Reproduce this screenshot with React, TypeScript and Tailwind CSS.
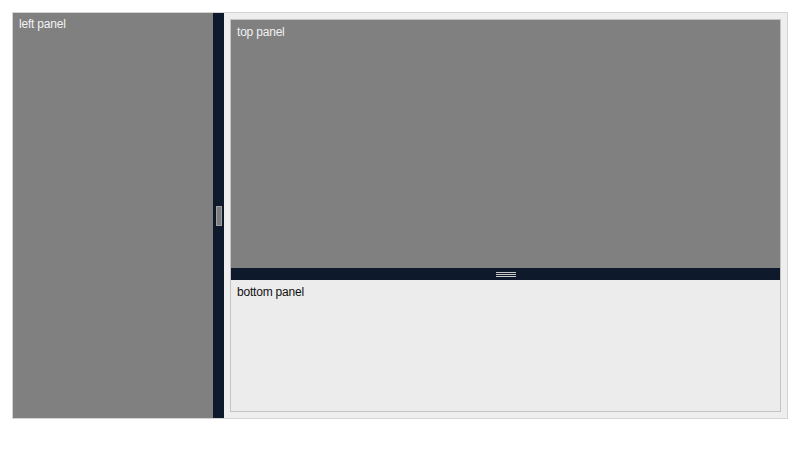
export default function App() {
  return (
    <div className="w-[800px] h-[450px] bg-white p-3" style={{ fontFamily: '"Liberation Sans", Arial, sans-serif' }}>
      <div className="flex h-[407px] w-[776px] border border-[#d4d4d4]">
        {/* left pane */}
        <div className="w-[200px] bg-[#808080] px-[6px] py-[2px] text-[12px] leading-[18px] tracking-[-0.2px] text-[#f2f2f2]">left panel</div>
        {/* vertical splitter */}
        <div className="flex w-[11px] items-center justify-center bg-[#0e1a2b]">
          <div className="h-[20px] w-[6px] border border-[#a0a0a0] bg-[#7c7c7c]" />
        </div>
        {/* right pane */}
        <div className="flex-1 bg-[#eeeeee] p-[6px]">
          <div className="flex h-full flex-col border border-[#c4c4c4]">
            <div className="h-[248px] bg-[#808080] px-[6px] py-[3px] text-[12px] leading-[18px] tracking-[-0.2px] text-[#f2f2f2]">top panel</div>
            <div className="flex h-[12px] items-center justify-center bg-[#0e1a2b]">
              <div className="flex w-[20px] flex-col gap-[1px]">
                <div className="h-[1px] bg-[#c8c8c8]" />
                <div className="h-[1px] bg-[#c8c8c8]" />
                <div className="h-[1px] bg-[#c8c8c8]" />
              </div>
            </div>
            <div className="flex-1 bg-[#ececec] px-[6px] py-[3px] text-[12px] leading-[18px] tracking-[-0.2px] text-[#111]">bottom panel</div>
          </div>
        </div>
      </div>
    </div>
  );
}
